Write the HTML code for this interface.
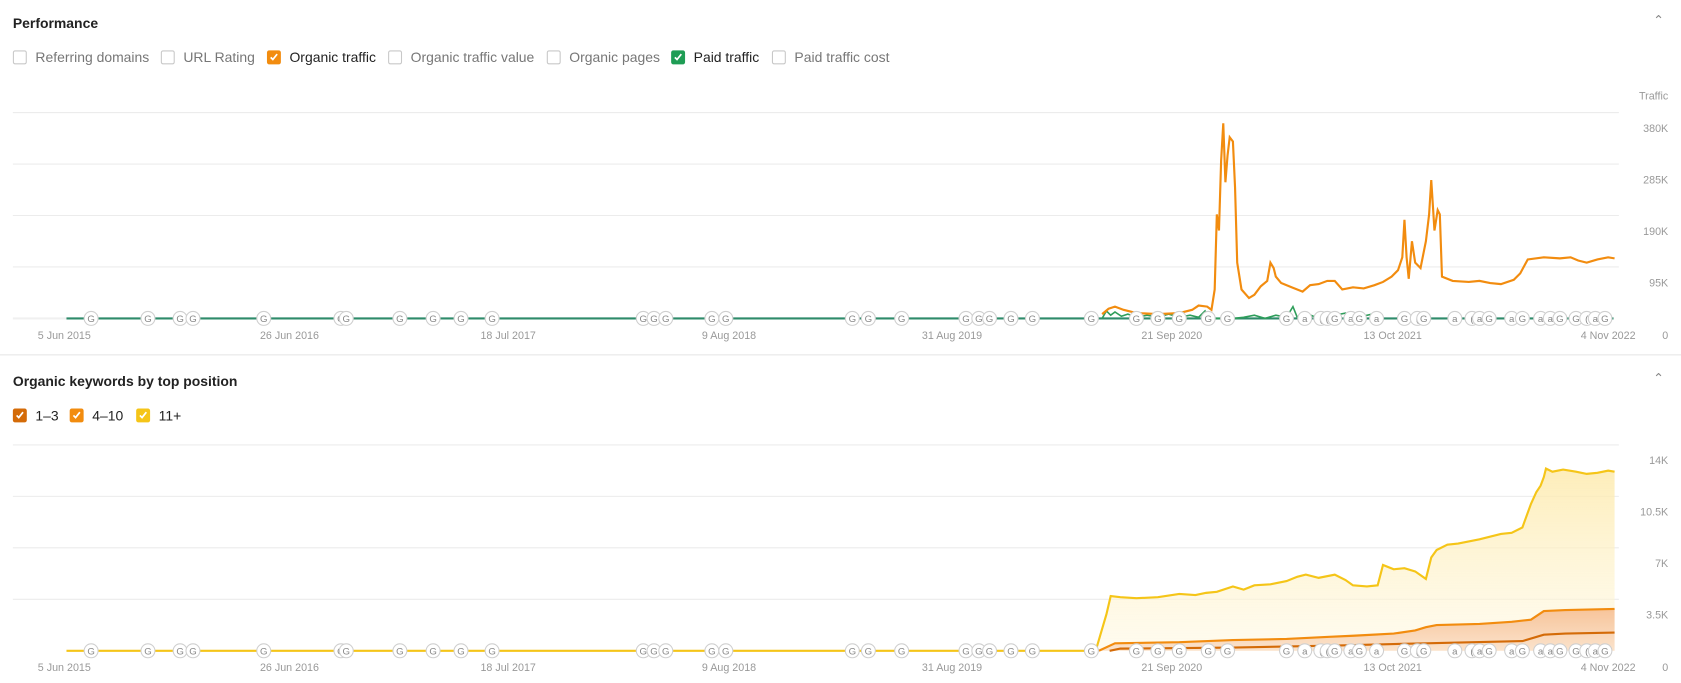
<!DOCTYPE html>
<html><head><meta charset="utf-8"><style>
body{margin:0;background:#fff;font-family:"Liberation Sans",Arial,sans-serif;width:1681px;height:683px;overflow:hidden;position:relative}
#w{position:absolute;left:0;top:0;width:1568px;height:637px;transform:scale(1.0721);transform-origin:0 0}
.t{position:absolute;left:12px;font-size:13px;font-weight:bold;color:#222}
.cb{position:absolute;top:46px;font-size:13px;color:#777;display:flex;align-items:center}
.box{width:11px;height:11px;border:1px solid #c8c8c8;border-radius:2px;margin-right:8px;display:inline-flex;align-items:center;justify-content:center}
.on{color:#222}
.chev{position:absolute;font-size:12px;color:#888}
svg{position:absolute;left:0;top:0}
</style></head><body><div id="w">
<div class="t" style="top:14px">Performance</div>
<div class="chev" style="top:12px;left:1542px">&#8963;</div>
<div class="cb" style="left:12px"><span class="box"></span>Referring domains</div>
<div class="cb" style="left:150px"><span class="box"></span>URL Rating</div>
<div class="cb on" style="left:249px"><span class="box" style="background:#f28c0f;border-color:#f28c0f"><svg width="9" height="9" style="position:static"><path d="M1.5 4.5l2 2 4-5" stroke="#fff" stroke-width="1.6" fill="none"/></svg></span>Organic traffic</div>
<div class="cb" style="left:362px"><span class="box"></span>Organic traffic value</div>
<div class="cb" style="left:510px"><span class="box"></span>Organic pages</div>
<div class="cb on" style="left:626px"><span class="box" style="background:#1f9d55;border-color:#1f9d55"><svg width="9" height="9" style="position:static"><path d="M1.5 4.5l2 2 4-5" stroke="#fff" stroke-width="1.6" fill="none"/></svg></span>Paid traffic</div>
<div class="cb" style="left:720px"><span class="box"></span>Paid traffic cost</div>

<div class="t" style="top:348px">Organic keywords by top position</div>
<div class="chev" style="top:346px;left:1542px">&#8963;</div>
<div class="cb on" style="left:12px;top:380px"><span class="box" style="background:#d46b08;border-color:#d46b08"><svg width="9" height="9" style="position:static"><path d="M1.5 4.5l2 2 4-5" stroke="#fff" stroke-width="1.6" fill="none"/></svg></span>1–3</div>
<div class="cb on" style="left:65px;top:380px"><span class="box" style="background:#f28c0f;border-color:#f28c0f"><svg width="9" height="9" style="position:static"><path d="M1.5 4.5l2 2 4-5" stroke="#fff" stroke-width="1.6" fill="none"/></svg></span>4–10</div>
<div class="cb on" style="left:127px;top:380px"><span class="box" style="background:#f5c518;border-color:#f5c518"><svg width="9" height="9" style="position:static"><path d="M1.5 4.5l2 2 4-5" stroke="#fff" stroke-width="1.6" fill="none"/></svg></span>11+</div>

<svg width="1568" height="637" id="s" font-family="Liberation Sans, Arial, sans-serif">
<defs><linearGradient id="gy" x1="0" y1="0" x2="0" y2="1"><stop offset="0" stop-color="#fde9a8" stop-opacity=".8"/><stop offset="1" stop-color="#fff8e0" stop-opacity=".5"/></linearGradient>
<linearGradient id="go" x1="0" y1="0" x2="0" y2="1"><stop offset="0" stop-color="#f7c49a"/><stop offset="1" stop-color="#fbe3cc"/></linearGradient></defs>
<g stroke="#ececec" stroke-width="1">
<line x1="12" x2="1510" y1="105" y2="105"/><line x1="12" x2="1510" y1="153" y2="153"/><line x1="12" x2="1510" y1="201" y2="201"/><line x1="12" x2="1510" y1="249" y2="249"/>
<line x1="12" x2="1510" y1="415" y2="415"/><line x1="12" x2="1510" y1="463" y2="463"/><line x1="12" x2="1510" y1="511" y2="511"/><line x1="12" x2="1510" y1="559" y2="559"/>
<line x1="0" x2="1568" y1="331" y2="331" stroke="#e4e4e4"/>
</g>
<g font-size="10" fill="#999" text-anchor="end">
<text x="1556" y="93">Traffic</text>
<text x="1556" y="123">380K</text><text x="1556" y="171">285K</text><text x="1556" y="219">190K</text><text x="1556" y="267">95K</text><text x="1556" y="316">0</text>
<text x="1556" y="433">14K</text><text x="1556" y="481">10.5K</text><text x="1556" y="529">7K</text><text x="1556" y="577">3.5K</text><text x="1556" y="626">0</text>
</g>
<g font-size="10" fill="#999" text-anchor="middle" id="xl"></g>
<line x1="12" x2="62" y1="297" y2="297" stroke="#f0f0f0" stroke-width="2"/>
<line x1="62" x2="1505" y1="297" y2="297" stroke="#2e8b6a" stroke-width="2"/>
<polyline fill="none" stroke="#2e9e5a" stroke-width="1.5" points="1028,297 1032,290 1036,294 1040,291 1046,295 1052,293 1060,296 1070,294 1080,296 1090,293 1100,296 1110,294 1118,296 1124,290 1128,297 1150,297 1160,296 1170,294 1180,297 1190,294 1200,296 1206,286 1210,296 1220,293 1230,297 1255,292 1262,297 1280,293 1290,297"/>
<polyline fill="none" stroke="#f28c0f" stroke-width="2" points="1028,293 1034,288 1040,286 1048,289 1060,292 1080,293 1100,292 1112,289 1118,285 1126,286 1130,289 1133,270 1135,200 1137,215 1139,150 1141,115 1143,170 1145,145 1147,128 1150,132 1152,175 1154,245 1158,270 1165,278 1170,275 1176,267 1182,262 1185,245 1188,250 1190,258 1195,264 1205,268 1215,272 1222,266 1230,265 1238,262 1245,262 1252,270 1262,268 1272,269 1282,266 1290,263 1298,258 1304,252 1308,240 1310,205 1312,240 1314,260 1317,225 1320,245 1325,250 1330,225 1333,200 1335,168 1338,215 1341,196 1343,200 1345,258 1355,262 1370,263 1380,262 1390,264 1400,265 1412,261 1418,255 1425,242 1440,240 1455,241 1465,240 1472,243 1480,245 1490,242 1500,240 1506,241"/>

<path fill="url(#gy)" d="M1022,607 L1032,573 1036,556 1045,557 1060,558 1080,557 1100,554 1115,555 1125,553 1135,552 1150,547 1160,550 1170,546 1185,545 1200,542 1210,538 1218,536 1230,539 1245,536 1255,541 1262,546 1275,547 1285,546 1290,527 1300,531 1310,530 1320,533 1330,540 1335,520 1340,513 1350,508 1360,507 1380,503 1400,498 1410,497 1420,492 1428,470 1433,459 1437,453 1440,445 1442,437 1448,440 1458,438 1470,440 1480,442 1490,441 1500,439 1506,440 L1506,607 Z"/>
<path fill="url(#go)" d="M1025,607 L1040,600 1100,599 1150,597 1200,596 1240,594 1262,593 1300,591 1320,588 1330,585 1340,583 1380,582 1410,580 1428,578 1440,570 1460,569 1506,568 L1506,607 Z"/>
<line x1="62" x2="1022" y1="607" y2="607" stroke="#f5c518" stroke-width="2"/>
<polyline fill="none" stroke="#f5c518" stroke-width="2" points="1022,607 1032,573 1036,556 1045,557 1060,558 1080,557 1100,554 1115,555 1125,553 1135,552 1150,547 1160,550 1170,546 1185,545 1200,542 1210,538 1218,536 1230,539 1245,536 1255,541 1262,546 1275,547 1285,546 1290,527 1300,531 1310,530 1320,533 1330,540 1335,520 1340,513 1350,508 1360,507 1380,503 1400,498 1410,497 1420,492 1428,470 1433,459 1437,453 1440,445 1442,437 1448,440 1458,438 1470,440 1480,442 1490,441 1500,439 1506,440"/>
<polyline fill="none" stroke="#f28c0f" stroke-width="2" points="1025,607 1040,600 1100,599 1150,597 1200,596 1240,594 1262,593 1300,591 1320,588 1330,585 1340,583 1380,582 1410,580 1428,578 1440,570 1460,569 1506,568"/>
<polyline fill="none" stroke="#d46b08" stroke-width="2" points="1035,607 1045,605 1150,604 1250,602 1330,600 1420,598 1440,592 1460,591 1506,590"/>
<g id="mk"></g>
</svg>
</div>
<script>
var s='http://www.w3.org/2000/svg';
var xl=document.getElementById('xl'),mk=document.getElementById('mk');
[[60,'5 Jun 2015'],[270,'26 Jun 2016'],[474,'18 Jul 2017'],[680,'9 Aug 2018'],[888,'31 Aug 2019'],[1093,'21 Sep 2020'],[1299,'13 Oct 2021'],[1500,'4 Nov 2022']].forEach(function(a){[316,626].forEach(function(y){var t=document.createElementNS(s,'text');t.setAttribute('x',a[0]);t.setAttribute('y',y);t.textContent=a[1];xl.appendChild(t);});});
var xs=[[85,'G'],[138,'G'],[168,'G'],[180,'G'],[246,'G'],[318,'G'],[323,'G'],[373,'G'],[404,'G'],[430,'G'],[459,'G'],[600,'G'],[610,'G'],[621,'G'],[664,'G'],[677,'G'],[795,'G'],[810,'G'],[841,'G'],[901,'G'],[913,'G'],[923,'G'],[943,'G'],[963,'G'],[1018,'G'],[1060,'G'],[1080,'G'],[1100,'G'],[1127,'G'],[1145,'G'],[1200,'G'],[1217,'a'],[1232,'('],[1238,'('],[1245,'G'],[1260,'a'],[1268,'G'],[1284,'a'],[1310,'G'],[1322,'('],[1328,'G'],[1357,'a'],[1373,'('],[1380,'a'],[1389,'G'],[1410,'a'],[1420,'G'],[1437,'a'],[1446,'a'],[1455,'G'],[1470,'G'],[1480,'('],[1488,'a'],[1497,'G']];
xs.forEach(function(a){[297,607].forEach(function(y){var c=document.createElementNS(s,'circle');c.setAttribute('cx',a[0]);c.setAttribute('cy',y);c.setAttribute('r',6.5);c.setAttribute('fill','#fff');c.setAttribute('stroke','#cfcfcf');mk.appendChild(c);var t=document.createElementNS(s,'text');t.setAttribute('x',a[0]);t.setAttribute('y',y+3.5);t.setAttribute('text-anchor','middle');t.setAttribute('font-size','9');t.setAttribute('fill','#888');t.textContent=a[1];mk.appendChild(t);});});
</script>
</body></html>
